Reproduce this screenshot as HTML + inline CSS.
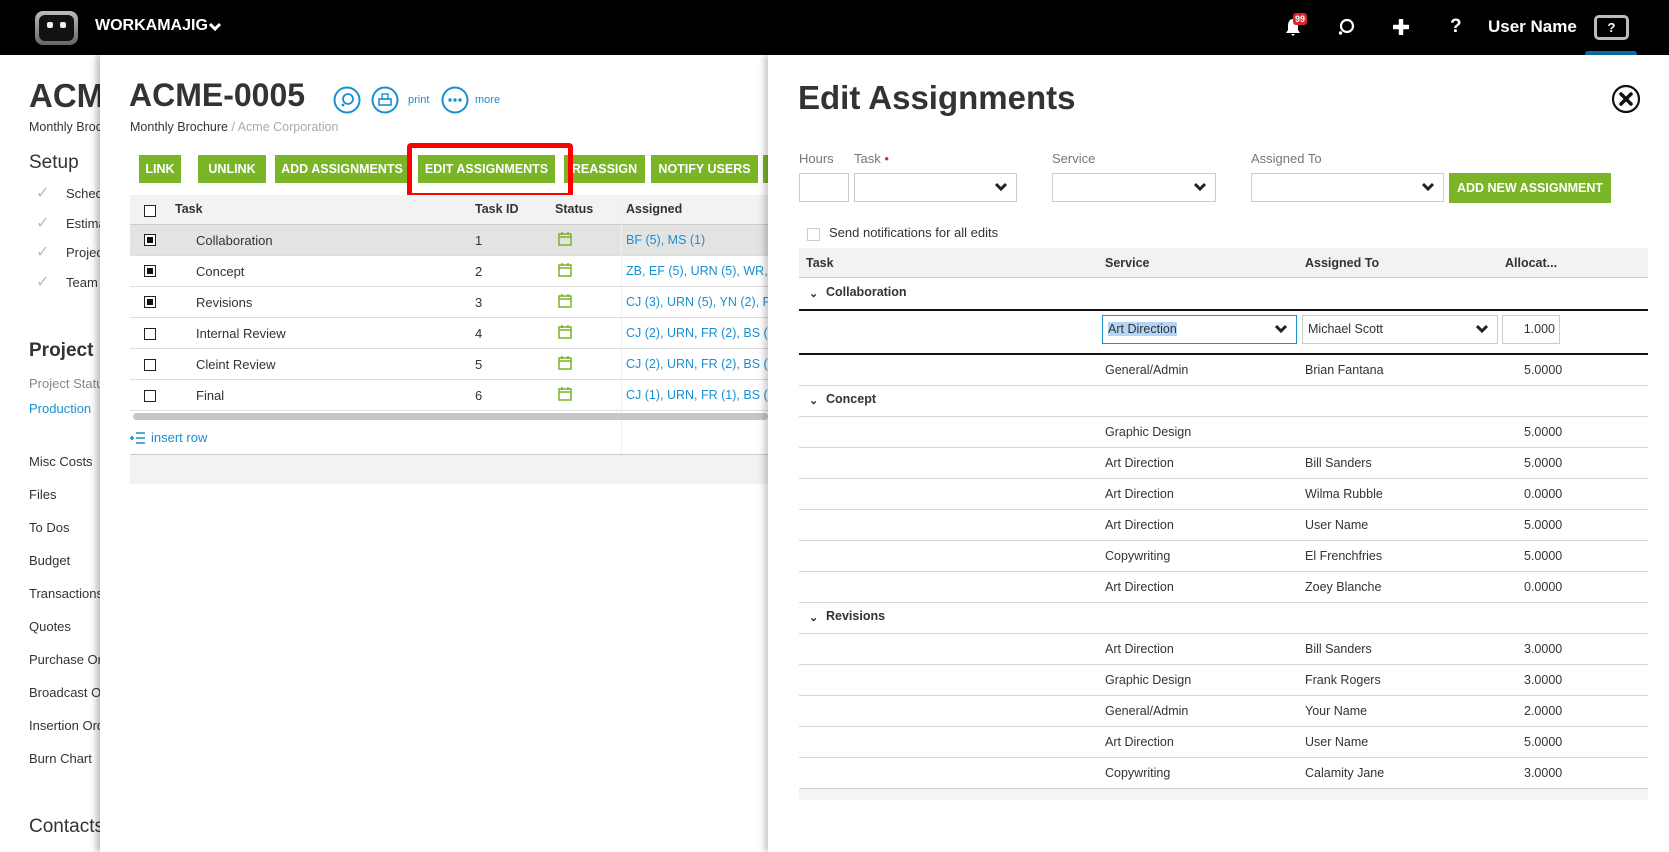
<!DOCTYPE html>
<html><head><meta charset="utf-8"><style>
*{box-sizing:border-box;margin:0;padding:0}
body{width:1669px;height:852px;overflow:hidden;background:#fff;font-family:"Liberation Sans",sans-serif;color:#333;font-size:13px;position:relative}
.a{position:absolute;white-space:nowrap}
.hdr{position:absolute;left:0;top:0;width:1669px;height:55px;background:#000}
.w{color:#fff}
.btn{position:absolute;top:155px;height:28px;background:#7ab427;color:#fff;font-weight:bold;font-size:12.5px;line-height:28px;text-align:center}
.row{position:absolute;left:130px;width:638px;height:31px;border-bottom:1px solid #ddd}
.cb{position:absolute;width:12px;height:12px;border:1.5px solid #222;background:#fff}
.cb.f::after{content:"";position:absolute;left:1.5px;top:1.5px;width:6px;height:6px;background:#111}
.blue{color:#1a8fd1}
.gr{position:absolute;left:799px;width:849px;height:31px;border-bottom:1px solid #d6d6d6}
.sel{position:absolute;height:29px;border:1px solid #ccc;background:#fff}
.chev{position:absolute;right:8px;top:7px;width:14px;height:12px}
</style></head><body>
<div class="hdr"></div>
<div class="a" style="left:35px;top:11px;width:43px;height:34px;border-radius:8px;background:linear-gradient(#bbb,#666);"></div>
<div class="a" style="left:39px;top:15px;width:35px;height:26px;border-radius:6px;background:#111;"></div>
<div class="a" style="left:47px;top:22px;width:6px;height:6px;border-radius:2px;background:#eee"></div>
<div class="a" style="left:60px;top:22px;width:6px;height:6px;border-radius:2px;background:#eee"></div>
<div class="a w" style="left:95px;top:17px;font-size:16px;font-weight:bold">WORKAMAJIG</div>
<svg class="a" style="left:208px;top:21px" width="14" height="12" viewBox="0 0 14 12"><path d="M2 3l5 5 5-5" stroke="#fff" stroke-width="3" fill="none"/></svg>
<svg class="a" style="left:1283px;top:17px" width="20" height="20" viewBox="0 0 20 20"><path d="M10 2c-4 0-5 4-5 7v4l-2 3h14l-2-3V9c0-3-1-7-5-7z M8 17h4l-2 2z" fill="#fff"/></svg>
<div class="a" style="left:1293px;top:13px;background:#d9262c;color:#fff;font-size:9px;font-weight:bold;border-radius:3px;padding:0 2px;line-height:12px">99</div>
<svg class="a" style="left:1337px;top:18px" width="18" height="18" viewBox="0 0 18 18"><circle cx="10" cy="8" r="6" stroke="#fff" stroke-width="2.2" fill="none"/><circle cx="3.5" cy="15" r="1.7" fill="#fff"/></svg>
<svg class="a" style="left:1393px;top:19px" width="16" height="16" viewBox="0 0 16 16"><path d="M8 1v14M1 8h14" stroke="#fff" stroke-width="4.5" stroke-linecap="round"/></svg>
<div class="a w" style="left:1450px;top:16px;font-size:19px;font-weight:bold">?</div>
<div class="a w" style="left:1488px;top:17px;font-size:17px;font-weight:bold">User Name</div>
<div class="a" style="left:1594px;top:15px;width:35px;height:25px;border:3px solid #bbb;border-radius:5px;color:#fff;font-size:13px;font-weight:bold;text-align:center;line-height:19px">?</div>
<div class="a" style="left:1585px;top:51px;width:52px;height:4px;background:#0d6fa8;border-radius:3px 3px 0 0"></div>

<div class="a" style="left:29px;top:77px;font-size:33px;font-weight:bold;color:#333">ACME-0005</div>
<div class="a" style="left:29px;top:120px;font-size:12.5px">Monthly Brochure</div>
<div class="a" style="left:29px;top:152px;font-size:19px">Setup</div>
<div class="a" style="left:36px;top:179px;color:#bbb;font-size:16px;line-height:29.5px;white-space:pre">✓
✓
✓
✓</div>
<div class="a" style="left:66px;top:179px;line-height:29.5px;white-space:pre">Schedule
Estimate
Project
Team</div>
<div class="a" style="left:29px;top:340px;font-size:19px;font-weight:bold">Project Info</div>
<div class="a" style="left:29px;top:376px;color:#888">Project Status</div>
<div class="a blue" style="left:29px;top:401px">Production</div>
<div class="a" style="left:29px;top:445px;line-height:33px;white-space:pre;font-size:13px">Misc Costs
Files
To Dos
Budget
Transactions
Quotes
Purchase Orders
Broadcast Orders
Insertion Orders
Burn Chart</div>
<div class="a" style="left:29px;top:816px;font-size:19px">Contacts</div>

<div class="a" style="left:100px;top:55px;width:668px;height:797px;background:#fff;box-shadow:-4px 0 6px rgba(0,0,0,.25)"></div>
<div class="a" style="left:129px;top:77px;font-size:32px;font-weight:bold;color:#333">ACME-0005</div>
<svg class="a" style="left:333px;top:86px" width="160" height="30" viewBox="0 0 160 30"><circle cx="14" cy="14" r="12.5" stroke="#1a8fd1" stroke-width="2" fill="none"/><circle cx="15" cy="13" r="5" stroke="#1a8fd1" stroke-width="1.8" fill="none"/><circle cx="10" cy="19" r="1.4" fill="#1a8fd1"/>
<circle cx="52" cy="14" r="12.5" stroke="#1a8fd1" stroke-width="2" fill="none"/><rect x="46" y="13" width="12" height="6" stroke="#1a8fd1" stroke-width="1.6" fill="none"/><rect x="49" y="8" width="6" height="5" stroke="#1a8fd1" stroke-width="1.4" fill="none"/>
<circle cx="122" cy="14" r="12.5" stroke="#1a8fd1" stroke-width="2" fill="none"/><circle cx="117" cy="14" r="1.7" fill="#1a8fd1"/><circle cx="122" cy="14" r="1.7" fill="#1a8fd1"/><circle cx="127" cy="14" r="1.7" fill="#1a8fd1"/></svg>
<div class="a blue" style="left:408px;top:94px;font-size:11px">print</div>
<div class="a blue" style="left:475px;top:94px;font-size:11px">more</div>
<div class="a" style="left:130px;top:120px;font-size:12.5px">Monthly Brochure <span style="color:#aaa">/ Acme Corporation</span></div>
<div class="btn" style="left:139px;width:42px">LINK</div>
<div class="btn" style="left:198px;width:68px">UNLINK</div>
<div class="btn" style="left:275px;width:134px">ADD ASSIGNMENTS</div>
<div class="btn" style="left:418px;width:137px">EDIT ASSIGNMENTS</div>
<div class="btn" style="left:564px;width:81px">REASSIGN</div>
<div class="btn" style="left:651px;width:107px">NOTIFY USERS</div>
<div class="btn" style="left:763px;width:5px"></div>
<div class="a" style="left:407px;top:143px;width:166px;height:55px;border:5px solid #f00;border-radius:4px"></div>
<div class="a" style="left:130px;top:195px;width:638px;height:30px;background:#f2f2f2;border-bottom:1px solid #ccc"></div>
<div class="cb" style="left:144px;top:205px"></div>
<div class="a" style="left:175px;top:202px;font-weight:bold;font-size:12.5px">Task</div>
<div class="a" style="left:475px;top:202px;font-weight:bold;font-size:12.5px">Task ID</div>
<div class="a" style="left:555px;top:202px;font-weight:bold;font-size:12.5px">Status</div>
<div class="a" style="left:626px;top:202px;font-weight:bold;font-size:12.5px">Assigned</div>
<div class="row" style="top:225px;background:#e3e3e3"></div>
<div class="row" style="top:256px"></div>
<div class="row" style="top:287px"></div>
<div class="row" style="top:318px"></div>
<div class="row" style="top:349px"></div>
<div class="row" style="top:380px"></div>
<div class="a" style="left:621px;top:195px;width:1px;height:290px;background:#eee"></div>
<div class="cb f" style="left:144px;top:234px"></div>
<div class="cb f" style="left:144px;top:265px"></div>
<div class="cb f" style="left:144px;top:296px"></div>
<div class="cb" style="left:144px;top:328px"></div>
<div class="cb" style="left:144px;top:359px"></div>
<div class="cb" style="left:144px;top:390px"></div>
<div class="a" style="left:196px;top:225px;line-height:31px;white-space:pre">Collaboration
Concept
Revisions
Internal Review
Cleint Review
Final</div>
<div class="a" style="left:475px;top:225px;line-height:31px;white-space:pre">1
2
3
4
5
6</div>
<div class="a blue" style="left:626px;top:225px;line-height:31px;white-space:pre;font-size:12.5px">BF (5), MS (1)
ZB, EF (5), URN (5), WR, BS
CJ (3), URN (5), YN (2), FR
CJ (2), URN, FR (2), BS (2)
CJ (2), URN, FR (2), BS (2)
CJ (1), URN, FR (1), BS (1)</div>
<svg class="a" style="left:557px;top:230px" width="16" height="190" viewBox="0 0 16 190">
<g stroke="#7ab427" stroke-width="1.5" fill="none">
<rect x="2" y="4" width="12" height="11"/><path d="M2 7h12M5 2v3M11 2v3"/>
<rect x="2" y="35" width="12" height="11"/><path d="M2 38h12M5 33v3M11 33v3"/>
<rect x="2" y="66" width="12" height="11"/><path d="M2 69h12M5 64v3M11 64v3"/>
<rect x="2" y="97" width="12" height="11"/><path d="M2 100h12M5 95v3M11 95v3"/>
<rect x="2" y="128" width="12" height="11"/><path d="M2 131h12M5 126v3M11 126v3"/>
<rect x="2" y="159" width="12" height="11"/><path d="M2 162h12M5 157v3M11 157v3"/></g></svg>
<div class="a" style="left:133px;top:413px;width:635px;height:7px;background:#c6c6c6;border-radius:4px"></div>
<svg class="a" style="left:130px;top:432px" width="16" height="12" viewBox="0 0 16 12"><path d="M6 1h9M6 6h9M6 11h9" stroke="#1a8fd1" stroke-width="1.6"/><path d="M0 6h4M2 4v4" stroke="#1a8fd1" stroke-width="1.6"/></svg>
<div class="a blue" style="left:151px;top:430px">insert row</div>
<div class="a" style="left:130px;top:454px;width:638px;height:30px;background:#f2f2f2;border-top:1px solid #ccc"></div>

<div class="a" style="left:768px;top:55px;width:901px;height:797px;background:#fff;box-shadow:-4px 0 6px rgba(0,0,0,.2)"></div>
<div class="a" style="left:798px;top:79px;font-size:33px;font-weight:bold;color:#333">Edit Assignments</div>
<svg class="a" style="left:1611px;top:84px" width="30" height="30" viewBox="0 0 30 30"><circle cx="15" cy="15" r="13" stroke="#111" stroke-width="2.2" fill="none"/><path d="M10 10l10 10M20 10l-10 10" stroke="#111" stroke-width="3.5" stroke-linecap="round"/></svg>
<div class="a" style="left:799px;top:151px;color:#777">Hours</div>
<div class="a" style="left:854px;top:151px;color:#777">Task <span style="color:#c33">•</span></div>
<div class="a" style="left:1052px;top:151px;color:#777">Service</div>
<div class="a" style="left:1251px;top:151px;color:#777">Assigned To</div>
<div class="sel" style="left:799px;top:173px;width:50px"></div>
<div class="sel" style="left:854px;top:173px;width:163px"><svg class="chev" viewBox="0 0 14 12"><path d="M2 3l5 5 5-5" stroke="#222" stroke-width="3" fill="none"/></svg></div>
<div class="sel" style="left:1052px;top:173px;width:164px"><svg class="chev" viewBox="0 0 14 12"><path d="M2 3l5 5 5-5" stroke="#222" stroke-width="3" fill="none"/></svg></div>
<div class="sel" style="left:1251px;top:173px;width:193px"><svg class="chev" viewBox="0 0 14 12"><path d="M2 3l5 5 5-5" stroke="#222" stroke-width="3" fill="none"/></svg></div>
<div class="a" style="left:1449px;top:173px;width:162px;height:30px;background:#7ab427;color:#fff;font-weight:bold;font-size:12.5px;line-height:30px;text-align:center">ADD NEW ASSIGNMENT</div>
<div class="a" style="left:807px;top:228px;width:13px;height:13px;border:1px solid #ccc"></div>
<div class="a" style="left:829px;top:225px">Send notifications for all edits</div>
<div class="a" style="left:799px;top:248px;width:849px;height:30px;background:#f2f2f2;border-bottom:1px solid #ccc"></div>
<div class="a" style="left:806px;top:256px;font-weight:bold;font-size:12.5px">Task</div>
<div class="a" style="left:1105px;top:256px;font-weight:bold;font-size:12.5px">Service</div>
<div class="a" style="left:1305px;top:256px;font-weight:bold;font-size:12.5px">Assigned To</div>
<div class="a" style="left:1505px;top:256px;font-weight:bold;font-size:12.5px">Allocat...</div>
<div class="a" style="left:809px;top:287px;font-size:11px;font-weight:bold">⌄</div>
<div class="a" style="left:826px;top:285px;font-weight:bold;font-size:12.5px">Collaboration</div>
<div class="a" style="left:799px;top:309px;width:849px;height:46px;border-top:2px solid #111;border-bottom:2px solid #111"></div>
<div class="sel" style="left:1102px;top:315px;width:195px;border-color:#1a8fd1"><span class="a" style="left:5px;top:6px;background:#b4d5f5;font-size:12.5px">Art Direction</span><svg class="chev" viewBox="0 0 14 12"><path d="M2 3l5 5 5-5" stroke="#222" stroke-width="3" fill="none"/></svg></div>
<div class="sel" style="left:1302px;top:315px;width:196px"><span class="a" style="left:5px;top:6px;font-size:12.5px">Michael Scott</span><svg class="chev" viewBox="0 0 14 12"><path d="M2 3l5 5 5-5" stroke="#222" stroke-width="3" fill="none"/></svg></div>
<div class="sel" style="left:1502px;top:315px;width:58px"><span class="a" style="right:4px;top:6px;font-size:12.5px">1.000</span></div>
<div class="gr" style="top:355px"></div>
<div class="gr" style="top:386px"></div>
<div class="gr" style="top:417px"></div>
<div class="gr" style="top:448px"></div>
<div class="gr" style="top:479px"></div>
<div class="gr" style="top:510px"></div>
<div class="gr" style="top:541px"></div>
<div class="gr" style="top:572px"></div>
<div class="gr" style="top:603px"></div>
<div class="gr" style="top:634px"></div>
<div class="gr" style="top:665px"></div>
<div class="gr" style="top:696px"></div>
<div class="gr" style="top:727px"></div>
<div class="gr" style="top:758px"></div>
<div class="a" style="left:799px;top:789px;width:849px;height:11px;background:#f4f4f4"></div>
<div class="a" style="left:809px;top:394px;font-size:11px;font-weight:bold">⌄</div>
<div class="a" style="left:826px;top:392px;font-weight:bold;font-size:12.5px">Concept</div>
<div class="a" style="left:809px;top:611px;font-size:11px;font-weight:bold">⌄</div>
<div class="a" style="left:826px;top:609px;font-weight:bold;font-size:12.5px">Revisions</div>
<div class="a" style="left:1105px;top:355px;line-height:31px;white-space:pre;font-size:12.5px">General/Admin

Graphic Design
Art Direction
Art Direction
Art Direction
Copywriting
Art Direction

Art Direction
Graphic Design
General/Admin
Art Direction
Copywriting</div>
<div class="a" style="left:1305px;top:355px;line-height:31px;white-space:pre;font-size:12.5px">Brian Fantana


Bill Sanders
Wilma Rubble
User Name
El Frenchfries
Zoey Blanche

Bill Sanders
Frank Rogers
Your Name
User Name
Calamity Jane</div>
<div class="a" style="left:1524px;top:355px;line-height:31px;white-space:pre;font-size:12.5px">5.0000

5.0000
5.0000
0.0000
5.0000
5.0000
0.0000

3.0000
3.0000
2.0000
5.0000
3.0000</div>
</body></html>
